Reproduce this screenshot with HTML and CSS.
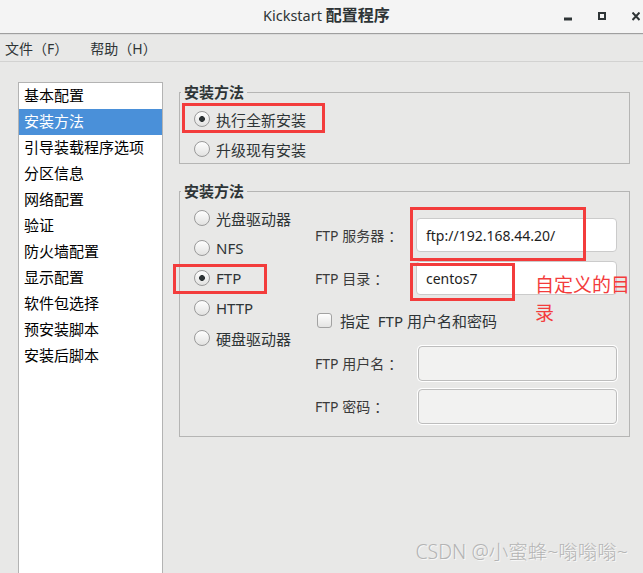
FILE: index.html
```html
<!DOCTYPE html>
<html lang="zh-CN">
<head>
<meta charset="utf-8">
<title>Kickstart 配置程序</title>
<link rel="stylesheet" href="styles.css">
</head>
<body>
<header class="titlebar">
  <div class="title">Kickstart <span class="title-cjk">配置程序</span></div>
  <div class="controls">
    <svg class="ctl" width="8" height="9" viewBox="0 0 8 9"><rect x="0" y="6" width="8" height="2"/></svg>
    <svg class="ctl" width="8" height="9" viewBox="0 0 8 9"><rect class="hollow" x="1" y="1" width="6" height="6" stroke-width="2"/></svg>
    <svg class="ctl" width="8" height="9" viewBox="0 0 8 9"><path class="hollow" d="M0.5 0.5 L7.5 8 M7.5 0.5 L0.5 8" stroke-width="2"/></svg>
  </div>
</header>
<nav class="menubar">
  <span>文件（F）</span>
  <span>帮助（H）</span>
</nav>
<div class="main">
  <ul class="nav-list">
    <li>基本配置</li>
    <li class="active">安装方法</li>
    <li>引导装载程序选项</li>
    <li>分区信息</li>
    <li>网络配置</li>
    <li>验证</li>
    <li>防火墙配置</li>
    <li>显示配置</li>
    <li>软件包选择</li>
    <li>预安装脚本</li>
    <li>安装后脚本</li>
  </ul>
  <div class="panel">
    <fieldset class="group g1">
      <legend>安装方法</legend>
      <div class="options">
        <label class="radio"><span class="rb on"></span>执行全新安装</label>
        <label class="radio"><span class="rb"></span>升级现有安装</label>
      </div>
    </fieldset>
    <fieldset class="group g2">
      <legend>安装方法</legend>
      <div class="g2-body">
        <div class="radios">
          <label class="radio"><span class="rb"></span>光盘驱动器</label>
          <label class="radio"><span class="rb"></span>NFS</label>
          <label class="radio"><span class="rb on"></span>FTP</label>
          <label class="radio"><span class="rb"></span>HTTP</label>
          <label class="radio"><span class="rb"></span>硬盘驱动器</label>
        </div>
        <div class="form">
          <div class="frow"><span class="flabel">FTP 服务器<span class="colon">：</span></span><div class="field">ftp://192.168.44.20/</div></div>
          <div class="frow"><span class="flabel">FTP 目录<span class="colon">：</span></span><div class="field">centos7</div></div>
          <div class="check-row"><span class="cb"></span><span class="cb-text">指定&nbsp; FTP 用户名和密码</span></div>
          <div class="frow"><span class="flabel">FTP 用户名<span class="colon">：</span></span><div class="field disabled"></div></div>
          <div class="frow"><span class="flabel">FTP 密码<span class="colon">：</span></span><div class="field disabled"></div></div>
        </div>
      </div>
    </fieldset>
  </div>
</div>

<div class="mark mark-new"></div>
<div class="mark mark-ftp"></div>
<div class="mark mark-server"></div>
<div class="mark mark-dir"></div>
<div class="note">自定义的目录</div>
<div class="watermark">CSDN @小蜜蜂~嗡嗡嗡~</div>
</body>
</html>
```

FILE: styles.css
```css
* { box-sizing: border-box; }

body {
  margin: 0;
  width: 643px;
  height: 573px;
  overflow: hidden;
  position: relative;
  background: #e8e8e7;
  font-family: "Noto Sans", "Noto Sans CJK SC", sans-serif;
  color: #2e3436;
}

.titlebar {
  height: 34px;
  background: #f4f4f4;
  border-bottom: 1px solid #9f9f9f;
  display: flex;
  align-items: center;
}

.title {
  margin-left: 263px;
  font-size: 14.5px;
  line-height: 18px;
  color: #2e3436;
  margin-top: -3px;
  white-space: nowrap;
}

.title-cjk {
  font-size: 16px;
  font-weight: 700;
}

.controls {
  margin-left: auto;
  margin-right: 3px;
  display: flex;
  gap: 26px;
  align-items: center;
  margin-top: -1px;
}

.ctl { fill: #2e3436; stroke: #2e3436; display: block; }
.ctl .hollow { fill: none; }

.menubar {
  height: 28px;
  border-bottom: 1px solid #d2d2d1;
  box-shadow: inset 0 1px 0 #dcdcdc;
  display: flex;
  align-items: center;
  gap: 22px;
  padding-left: 5px;
  font-size: 14px;
  color: #2e3436;
}

.main {
  display: flex;
  align-items: flex-start;
  padding: 20px 0 0 18px;
}

.nav-list {
  list-style: none;
  margin: 0;
  padding: 0;
  width: 145px;
  height: 491px;
  flex: none;
  background: #fff;
  border: 1px solid #b3b3b3;
  border-bottom: 0;
  font-size: 15px;
  color: #000;
}

.nav-list li {
  height: 26px;
  line-height: 24px;
  padding-left: 5px;
  white-space: nowrap;
}

.nav-list li.active {
  background: #4a90d9;
  color: #fff;
}

.panel {
  width: 451px;
  margin-left: 16px;
  margin-top: 1px;
}

.group {
  margin: 0;
  padding: 0;
  min-width: 0;
  border: 1px solid #b5b5b4;
}

.group legend {
  margin-left: 1px;
  padding: 0 3px;
  font-size: 15px;
  line-height: 18px;
  font-weight: 700;
  color: #2e3436;
}

.g1 { padding-top: 4px; }

.options {
  display: flex;
  flex-direction: column;
  gap: 2px;
  padding-left: 14px;
}

.options .radio { height: 28px; }

.radio {
  display: flex;
  align-items: center;
  font-size: 15px;
  color: #2e3436;
  white-space: nowrap;
}

.rb {
  flex: none;
  width: 16px;
  height: 16px;
  margin-right: 6px;
  border-radius: 50%;
  border: 1px solid #9a9a9a;
  background: linear-gradient(#fefefe, #e2e2e1);
}

.rb.on {
  background: radial-gradient(circle, #2e3436 0 2.6px, transparent 3.2px), linear-gradient(#fefefe, #e2e2e1);
}

.g2 {
  margin-top: 18px;
  padding: 3px 0 13px 0;
}

.g2-body {
  display: flex;
  align-items: flex-start;
}

.radios {
  width: 135px;
  padding-left: 14px;
  display: flex;
  flex-direction: column;
  flex: none;
}

.radios .radio { height: 30px; }

.form {
  margin-top: 15px;
  width: 302px;
  display: flex;
  flex-direction: column;
}

.frow {
  display: flex;
  align-items: center;
  height: 34px;
}

.frow + .frow { margin-top: 9px; }

.flabel {
  width: 101px;
  flex: none;
  font-size: 14px;
  color: #3a3a3a;
  white-space: nowrap;
}

.colon { margin-left: 4px; }

.field {
  width: 201px;
  height: 34px;
  border: 1px solid #cbcbcb;
  border-radius: 4px;
  background: #fff;
  padding-left: 9px;
  display: flex;
  align-items: center;
  font-size: 14px;
  color: #1e1e1e;
}

.field.disabled {
  width: 199px;
  margin-left: 2px;
  height: 35px;
  background: #f2f2f1;
  border-color: #bdbdbd;
  box-shadow: 0 0 0 1px #fff;
}

.check-row {
  height: 51px;
  display: flex;
  align-items: center;
  padding-left: 2px;
}

.cb {
  flex: none;
  width: 15px;
  height: 15px;
  border: 1px solid #a2a2a2;
  border-radius: 3px;
  background: linear-gradient(#fefefe, #e4e4e3);
  margin-right: 8px;
}

.cb-text {
  font-size: 15px;
  color: #2e3436;
  white-space: nowrap;
}

/* red annotation overlays */
.mark {
  position: absolute;
  border: 3px solid #f33c3c;
}

.mark-new { left: 182px; top: 103px; width: 143px; height: 30px; }
.mark-ftp { left: 173px; top: 264px; width: 94px; height: 30px; }
.mark-server { left: 410px; top: 207px; width: 176px; height: 54px; }
.mark-dir { left: 410px; top: 263px; width: 105px; height: 38px; }

.note {
  position: absolute;
  left: 535px;
  top: 270px;
  width: 100px;
  font-family: "Noto Sans CJK SC", sans-serif;
  font-size: 19px;
  line-height: 28px;
  color: #f33c3c;
}

.watermark {
  position: absolute;
  right: 15px;
  top: 540px;
  font-family: "Noto Sans", "Noto Sans CJK SC", sans-serif;
  font-size: 19.5px;
  font-weight: 300;
  line-height: 24px;
  color: #b4b4b4;
  text-shadow: 1px 1px 0 rgba(255, 255, 255, 0.7);
  white-space: nowrap;
}
```
